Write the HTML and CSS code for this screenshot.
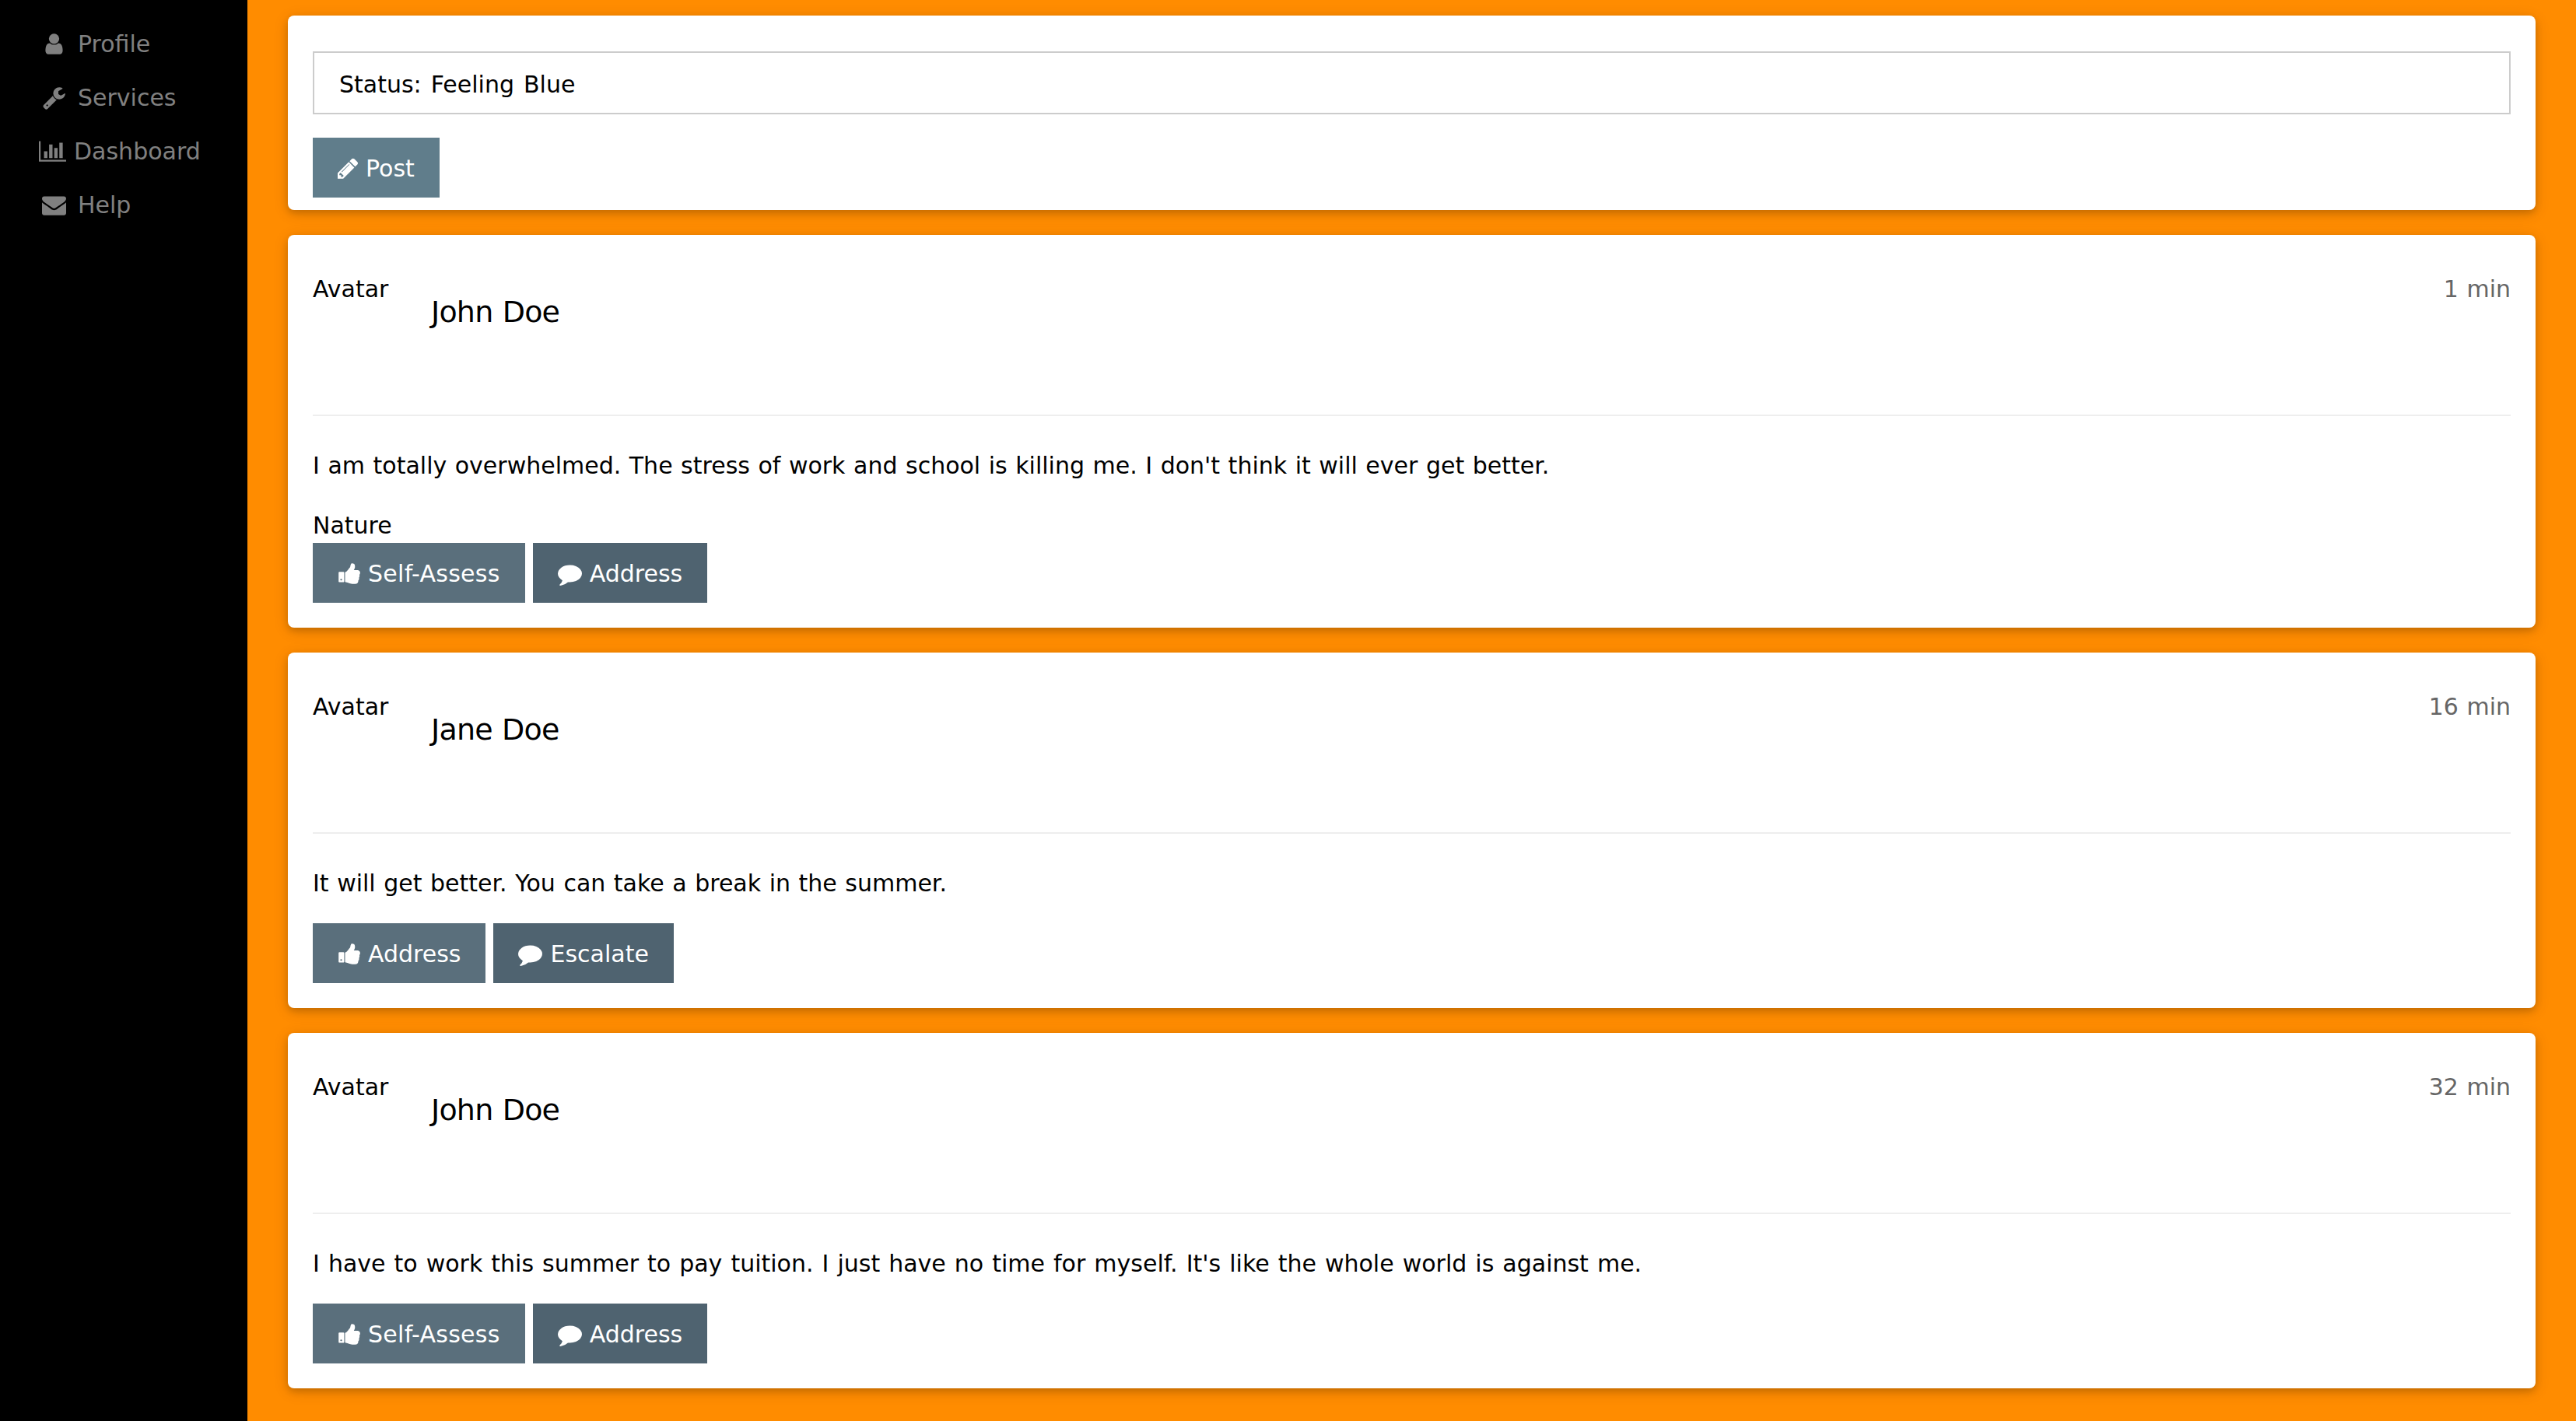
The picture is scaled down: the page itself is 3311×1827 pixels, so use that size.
FILE: index.html
```html
<!DOCTYPE html>
<html lang="en">
<head>
    <meta charset="UTF-8">
    <title>Social</title>
    <link rel="stylesheet" href="styles.css">
</head>
<body>
    <svg class="sprites" width="0" height="0">
        <symbol id="i-user" viewBox="0 0 1792 1792"><path d="M1536 1399q0 109-62.5 187t-150.5 78h-854q-88 0-150.5-78t-62.5-187q0-85 8.5-160.5t31.5-152 58.5-131 94-89 134.5-34.5q131 128 313 128t313-128q76 0 134.5 34.5t94 89 58.5 131 31.5 152 8.5 160.5zm-256-887q0 159-112.5 271.5t-271.5 112.5-271.5-112.5-112.5-271.5 112.5-271.5 271.5-112.5 271.5 112.5 112.5 271.5z"/></symbol>
        <symbol id="i-wrench" viewBox="0 0 1792 1792"><path d="M448 1472q0-26-19-45t-45-19-45 19-19 45 19 45 45 19 45-19 19-45zm644-420l-682 682q-37 37-90 37-52 0-91-37l-106-108q-38-36-38-90 0-53 38-91l681-681q39 98 114.5 173.5t173.5 114.5zm634-435q0 39-23 106-47 134-164.5 217.5t-258.5 83.5q-185 0-316.5-131.5t-131.5-316.5 131.5-316.5 316.5-131.5q58 0 121.5 16.5t107.5 46.5q16 11 16 28t-16 28l-293 169v224l193 107q5-3 79-48.5t135.5-81 70.5-35.5q15 0 23.5 10t8.5 25z"/></symbol>
        <symbol id="i-chart" viewBox="0 0 2048 1792"><path d="M640 896v512h-256v-512h256zm384-512v1024h-256v-1024h256zm1024 1152v128h-2048v-1536h128v1408h1920zm-640-896v768h-256v-768h256zm384-384v1152h-256v-1152h256z"/></symbol>
        <symbol id="i-mail" viewBox="0 0 1792 1792"><path d="M1792 710v794q0 66-47 113t-113 47h-1472q-66 0-113-47t-47-113v-794q44 49 101 87 362 246 497 345 57 42 92.5 65.5t94.5 48 110 24.5h2q51 0 110-24.5t94.5-48 92.5-65.5q170-123 498-345 57-39 100-87zm0-294q0 79-49 151t-122 123q-376 261-468 325-10 7-42.5 30.5t-54 38-52 32.5-57.5 27-50 9h-2q-23 0-50-9t-57.5-27-52-32.5-54-38-42.5-30.5q-91-64-262-182.5t-205-142.5q-62-42-117-115.5t-55-136.5q0-78 41.5-130t118.5-52h1472q65 0 112.5 47t47.5 113z"/></symbol>
        <symbol id="i-pencil" viewBox="128 0 1515 1792"><path d="M491 1536l91-91-235-235-91 91v107h128v128h107zm523-928q0-22-22-22-10 0-17 7l-542 542q-7 7-7 17 0 22 22 22 10 0 17-7l542-542q7-7 7-17zm-54-192l416 416-832 832h-416v-416zm683 96q0 53-37 90l-166 166-416-416 166-165q36-38 90-38 53 0 91 38l235 234q37 39 37 91z"/></symbol>
        <symbol id="i-thumb" viewBox="0 0 1664 1792"><path d="M320 1344q0-26-19-45t-45-19q-27 0-45.5 19t-18.5 45q0 27 18.5 45.5t45.5 18.5q26 0 45-18.5t19-45.5zm160-512v640q0 26-19 45t-45 19h-288q-26 0-45-19t-19-45v-640q0-26 19-45t45-19h288q26 0 45 19t19 45zm1184 0q0 86-55 149 15 44 15 76 3 76-43 137 17 56 0 117-15 57-54 94 9 112-49 181-64 76-197 78h-129q-66 0-144-15.5t-121.5-29-120.5-39.5q-123-43-158-44-26-1-45-19.5t-19-44.5v-641q0-25 18-43.5t43-20.5q24-2 76-59t101-121q68-87 101-120 18-18 31-48t17.5-48.5 13.5-60.5q7-39 12.5-61t19.5-52 34-50q19-19 45-19 46 0 82.5 10.5t60 26 40 40.5 24 45 12 50 5 45 .5 39q0 38-9.5 76t-19 60-27.5 56q-3 6-10 18t-11 22-8 24h277q78 0 135 57t57 135z"/></symbol>
        <symbol id="i-comment" viewBox="0 0 1792 1792"><path d="M1792 896q0 174-120 321.5t-326 233-450 85.5q-70 0-145-8-198 175-460 242-49 14-114 22-17 2-30.5-9t-17.5-29v-1q-3-4-.5-12t2-10 4.5-9.5l6-9 7-8.5 8-9q7-8 31-34.5t34.5-38 31-39.5 32.5-51 27-59 26-76q-157-89-247.5-220t-90.5-281q0-130 71-248.5t191-204.5 286-136.5 348-50.5q244 0 450 85.5t326 233 120 321.5z"/></symbol>
    </svg>

    <div class="page">
        <nav class="sidebar">
            <a class="nav-item" href="#"><svg class="nav-icon"><use href="#i-user"/></svg>Profile</a>
            <a class="nav-item" href="#"><svg class="nav-icon"><use href="#i-wrench"/></svg>Services</a>
            <a class="nav-item nav-wide" href="#"><svg class="nav-icon"><use href="#i-chart"/></svg>Dashboard</a>
            <a class="nav-item" href="#"><svg class="nav-icon"><use href="#i-mail"/></svg>Help</a>
        </nav>

        <main class="main">
            <section class="card card-compose">
                <div class="status">Status: Feeling Blue</div>
                <button class="btn btn-post"><svg class="btn-icon icon-pencil"><use href="#i-pencil"/></svg>Post</button>
            </section>

            <section class="card">
                <div class="post-head">
                    <div class="avatar">Avatar</div>
                    <h4 class="name">John Doe</h4>
                    <span class="time">1 min</span>
                </div>
                <hr class="rule">
                <p class="text">I am totally overwhelmed. The stress of work and school is killing me. I don't think it will ever get better.</p>
                <div class="tag">Nature</div>
                <div class="actions">
                    <button class="btn btn-wide"><svg class="btn-icon icon-thumb"><use href="#i-thumb"/></svg>Self-Assess</button>
                    <button class="btn btn-dark"><svg class="btn-icon"><use href="#i-comment"/></svg>Address</button>
                </div>
            </section>

            <section class="card">
                <div class="post-head">
                    <div class="avatar">Avatar</div>
                    <h4 class="name">Jane Doe</h4>
                    <span class="time">16 min</span>
                </div>
                <hr class="rule">
                <p class="text">It will get better. You can take a break in the summer.</p>
                <div class="actions">
                    <button class="btn"><svg class="btn-icon icon-thumb"><use href="#i-thumb"/></svg>Address</button>
                    <button class="btn btn-dark"><svg class="btn-icon"><use href="#i-comment"/></svg>Escalate</button>
                </div>
            </section>

            <section class="card">
                <div class="post-head">
                    <div class="avatar">Avatar</div>
                    <h4 class="name">John Doe</h4>
                    <span class="time">32 min</span>
                </div>
                <hr class="rule">
                <p class="text text-long">I have to work this summer to pay tuition. I just have no time for myself. It's like the whole world is against me.</p>
                <div class="actions">
                    <button class="btn btn-wide"><svg class="btn-icon icon-thumb"><use href="#i-thumb"/></svg>Self-Assess</button>
                    <button class="btn btn-dark"><svg class="btn-icon"><use href="#i-comment"/></svg>Address</button>
                </div>
            </section>
        </main>
    </div>
</body>
</html>
```

FILE: styles.css
```css
html, body {
    margin: 0;
    height: 100%;
}
body {
    font-family: "DejaVu Sans", Verdana, sans-serif;
    font-size: 30px;
    line-height: 1.5;
    word-spacing: 1px;
    background-color: #ff8c00;
    color: #000;
    overflow: hidden;
}
.sprites {
    display: none;
}
.page {
    display: flex;
    min-height: 100%;
}

.sidebar {
    width: 318px;
    flex: none;
    background-color: #000;
    box-sizing: border-box;
    padding-top: 22px;
    min-height: 1827px;
}
.nav-item {
    display: flex;
    align-items: center;
    height: 69px;
    padding-left: 54px;
    color: #808080;
    text-decoration: none;
}
.nav-wide {
    padding-left: 50px;
}
.nav-icon {
    width: 31px;
    height: 31px;
    fill: #808080;
    margin-right: 15px;
}
.nav-wide .nav-icon {
    width: 35px;
    margin-right: 10px;
}

.main {
    flex: 1;
    padding: 20px 52px 0;
}
.card {
    background-color: #fff;
    border-radius: 8px;
    padding: 32px;
    margin-bottom: 32px;
    box-shadow: 0 4px 10px 0 rgba(0, 0, 0, 0.16), 0 4px 20px 0 rgba(0, 0, 0, 0.12);
}
.card-compose {
    padding-bottom: 16px;
}

.status {
    height: 77px;
    line-height: 81px;
    margin-top: 14px;
    border: 2px solid #ccc;
    padding-left: 32px;
    word-spacing: 2.5px;
}

.btn {
    display: inline-flex;
    align-items: center;
    height: 77px;
    padding: 2px 32px 0;
    border: none;
    font: inherit;
    word-spacing: inherit;
    color: #fff;
    background-color: #5a6f7c;
}
.btn-post {
    background-color: #607d8b;
    margin-top: 30px;
}
.btn-dark {
    background-color: #4f6370;
}
.btn-wide {
    letter-spacing: 0.3px;
}
.btn-icon {
    width: 31px;
    height: 31px;
    fill: #fff;
    margin-right: 10px;
}
.icon-thumb {
    width: 29px;
}
.icon-pencil {
    width: 26px;
}

.post-head {
    display: flex;
    align-items: flex-start;
    height: 199px;
}
.avatar {
    width: 152px;
    margin-top: 15px;
}
.name {
    flex: 1;
    margin: 40px 0 0;
    font-size: 38px;
    font-weight: normal;
    line-height: 54px;
    letter-spacing: -0.8px;
}
.time {
    color: #666;
    margin-top: 15px;
}
.rule {
    border: none;
    border-top: 2px solid #eee;
    margin: 0;
}
.text {
    margin: 41px 0 29px;
}
.text-long {
    word-spacing: 1.5px;
}
.tag {
    height: 48px;
    line-height: 52px;
}
.actions {
    display: flex;
    gap: 10px;
}
```
